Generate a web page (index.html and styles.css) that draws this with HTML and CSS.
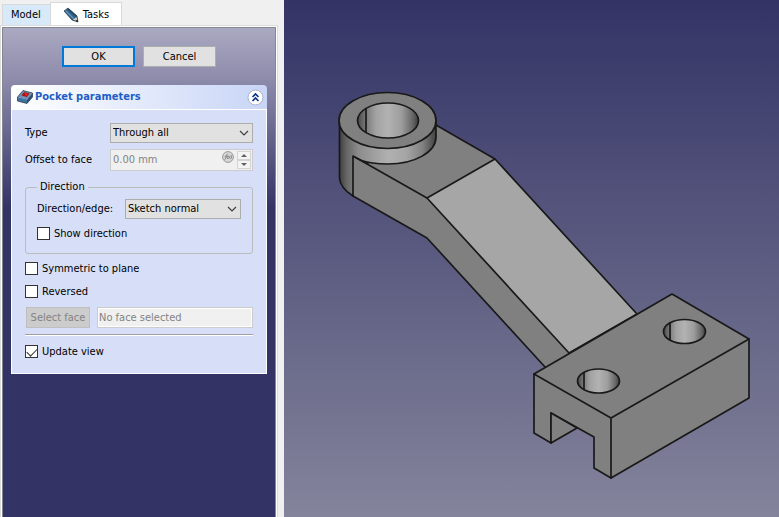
FILE: index.html
```html
<!DOCTYPE html>
<html lang="en">
<head>
<meta charset="utf-8">
<title>Pocket parameters</title>
<link rel="stylesheet" href="styles.css">
</head>
<body>
<div class="app">
  <aside class="combo">
    <nav class="tabs" role="tablist">
      <button class="tab" type="button" role="tab" aria-selected="false">Model</button>
      <button class="tab active" type="button" role="tab" aria-selected="true">
        <svg class="pencil" viewBox="0 0 16 16" aria-hidden="true">
          <path d="M1 4 5 1 14 9 15 15 9 13Z" fill="#32608a"/>
          <path d="M2.500 3.500 10.500 11.500" stroke="#5f9ac4" stroke-width="1.2"/>
          <path d="M5 2 13.500 9.500" stroke="#24486a" stroke-width="1.2"/>
          <path d="M10 12.500 13.500 10 15 15Z" fill="#d8cdb4"/>
          <path d="M12.500 14 14.500 12.500 15 15Z" fill="#15191d"/>
          <path d="M1 4 5 1 14 9 15 15 9 13Z" fill="none" stroke="#243542" stroke-width=".7"/>
        </svg>
        Tasks
      </button>
    </nav>
    <div class="pane">
      <form class="tasks">
        <div class="actions">
          <button class="push default" type="button">OK</button>
          <button class="push" type="button">Cancel</button>
        </div>
        <section class="box">
          <header class="box-head">
            <svg class="pocket" viewBox="0 0 16 14" aria-hidden="true">
              <path d="M.5 7 6 .5 15.500 3 10 9.500Z" fill="#6d92b6"/>
              <path d="M.5 7 10 9.500V13.500L.5 11Z" fill="#41719f"/>
              <path d="M10 9.500 15.500 3V7L10 13.500Z" fill="#2b4d70"/>
              <path d="M4.500 5.500 7 2 12.500 3.500 10 7Z" fill="#a81218"/>
              <path d="M7 3 11 4 9.500 6.200Z" fill="#f32618"/>
              <path d="M.5 7 6 .5 15.500 3V7L10 13.500 .5 11Z" fill="none" stroke="#1d3045" stroke-width=".7"/>
            </svg>
            <h1>Pocket parameters</h1>
            <button class="fold" type="button" aria-label="Collapse">
              <svg viewBox="0 0 17 17" aria-hidden="true">
                <circle cx="8.5" cy="8.5" r="7.5" fill="#fff" stroke="#a9b3d4"/>
                <path d="M5.5 8 8.5 5 11.5 8M5.5 12 8.5 9 11.5 12" fill="none" stroke="#0b2f8c" stroke-width="1.6"/>
              </svg>
            </button>
          </header>
          <div class="box-body">
            <div class="fields">
              <label for="type">Type</label>
              <div class="drop">
                <select id="type"><option>Through all</option></select>
                <svg class="chevron" viewBox="0 0 10 6" aria-hidden="true"><path d="M1 1 5 5 9 1"/></svg>
              </div>
              <label for="offset">Offset to face</label>
              <div class="spin">
                <input id="offset" type="text" value="0.00 mm" disabled>
                <svg class="fx" viewBox="0 0 12 12" aria-hidden="true">
                  <circle cx="6" cy="6" r="5.4" fill="#d6d6d6" stroke="#999"/>
                  <path d="M2.4 8.8C4 9 3.8 3 5.6 3M2.8 5.5H5M5.6 8C4.8 6.8 5 5.2 6 4.2M6.4 5 8 7.6M8.2 5 6.2 7.8M8.8 4C9.8 5.3 9.6 7 8.8 8" fill="none" stroke="#858585" stroke-width=".9"/>
                </svg>
                <div class="steps">
                  <button type="button" aria-label="Increase" disabled><svg viewBox="0 0 6 3" aria-hidden="true"><path d="M0 3 3 0 6 3Z"/></svg></button>
                  <button type="button" aria-label="Decrease" disabled><svg viewBox="0 0 6 3" aria-hidden="true"><path d="M0 0 3 3 6 0Z"/></svg></button>
                </div>
              </div>
            </div>
            <fieldset>
              <legend>Direction</legend>
              <div class="edge">
                <label for="edge">Direction/edge:</label>
                <div class="drop">
                  <select id="edge"><option>Sketch normal</option></select>
                  <svg class="chevron" viewBox="0 0 10 6" aria-hidden="true"><path d="M1 1 5 5 9 1"/></svg>
                </div>
              </div>
              <label class="check"><input type="checkbox">Show direction</label>
            </fieldset>
            <div class="checks">
              <label class="check"><input type="checkbox">Symmetric to plane</label>
              <label class="check"><input type="checkbox">Reversed</label>
            </div>
            <div class="face">
              <button type="button" disabled>Select face</button>
              <input type="text" value="No face selected" aria-label="Face" disabled>
            </div>
            <hr>
            <label class="check"><input type="checkbox" checked>Update view</label>
          </div>
        </section>
      </form>
    </div>
  </aside>
  <main class="view">
    <svg class="model" viewBox="284 0 495 517" role="img" aria-label="Bracket model">
      <defs>
        <linearGradient id="wall" gradientUnits="userSpaceOnUse" x1="339" x2="437" y1="0" y2="0">
          <stop offset="0" stop-color="#3d3d3d"/>
          <stop offset=".08" stop-color="#666"/>
          <stop offset=".2" stop-color="#8c8c8c"/>
          <stop offset=".5" stop-color="#b0b0b0"/>
          <stop offset=".68" stop-color="#a6a6a6"/>
          <stop offset=".85" stop-color="#828282"/>
          <stop offset="1" stop-color="#3c3c3c"/>
        </linearGradient>
        <linearGradient id="bore">
          <stop offset="0" stop-color="#484848"/>
          <stop offset=".15" stop-color="#7d7d7d"/>
          <stop offset=".3" stop-color="#a2a2a2"/>
          <stop offset=".5" stop-color="#b2b2b2"/>
          <stop offset=".72" stop-color="#9d9d9d"/>
          <stop offset=".9" stop-color="#686868"/>
          <stop offset="1" stop-color="#3d3d3d"/>
        </linearGradient>
      </defs>
      <g stroke="#191919" stroke-width="1.7" stroke-linejoin="round" stroke-linecap="round">
        <path fill="#808080" d="M353 156 436 125 495 159 427 198 570 354 545 367 427 238 353 196Z" stroke="none"/>
        <path fill="#a6a6a6" d="M427 198 495 159 637 314 569 353Z"/>
        <path fill="none" d="M436 125 495 159M353 156 427 198M353 196 427 238 545 367"/>
        <path fill="url(#wall)" stroke="none" d="M339 120V178C340 185 345 191 353 196V156C363 161 375 164 388 164C415 164 436 152 436 137V120Z"/>
        <path fill="none" d="M339.500 120V178C340 185 345 191 353 196V156L368 164M360 160C368 163 378 164 388 164C415 164 436 152 436 137V120"/>
        <ellipse cx="387.500" cy="120.500" rx="48.500" ry="28" fill="#808080"/>
        <ellipse cx="388" cy="120.500" rx="30.500" ry="17.500" fill="url(#bore)"/>
        <path fill="none" d="M366 109V132"/>
        <path fill="#808080" d="M534 374 672 294 749 339V398L611 478 594 468V437L551 413V443L534 433Z"/>
        <path fill="#808080" d="M551 413 577 428 551 443Z"/>
        <path fill="none" d="M534 374 611 418 749 339M611 418V478"/>
        <ellipse cx="598.500" cy="381" rx="21" ry="12" fill="url(#bore)"/>
        <ellipse cx="684.500" cy="331.500" rx="21" ry="12" fill="url(#bore)"/>
        <path fill="none" d="M584 373V389M670 323V340"/>
      </g>
    </svg>
  </main>
</div>
</body>
</html>
```
FILE: styles.css
```css
* { box-sizing: border-box; }

body {
  margin: 0;
  background: #f0f0f0;
  color: #000;
}

body, button, input, select {
  font-family: "DejaVu Sans Condensed", "Noto Sans", sans-serif;
  font-size: 11px;
  line-height: 14px;
}

.app {
  display: grid;
  grid-template-columns: 284px 1fr;
  min-height: 100vh;
}

.combo {
  display: flex;
  flex-direction: column;
  padding: 2px 6px 0 0;
}

.tabs {
  display: flex;
  align-items: flex-end;
  height: 23px;
  padding-left: 2px;
}

.tab {
  height: 21px;
  padding: 0 9px 0 8px;
  border: 1px solid #d9d9d9;
  border-width: 1px 0 0 1px;
  background: #d8eaf9;
}

.tab.active {
  display: flex;
  align-items: center;
  gap: 4px;
  height: 24px;
  margin-bottom: -1px;
  padding: 0 12px;
  border-width: 1px 1px 0;
  background: #fff;
}

.pencil { width: 16px; height: 16px; }

.pane {
  flex: 1;
  padding: 1px 1px 0;
  border: 1px solid #dcdcdc;
  border-width: 1px 1px 0;
  background: #fff;
}

.tasks {
  height: 100%;
  padding: 18px 8px 0;
  border: 1px solid #828790;
  border-bottom: 0;
  background: linear-gradient(#aaa9c1, #8e8cab 50px, #333366 180px);
}

.actions {
  display: flex;
  justify-content: center;
  gap: 8px;
  margin-bottom: 18px;
}

.push {
  width: 73px;
  height: 21px;
  padding: 0;
  border: 1px solid #adadad;
  background: #e1e1e1;
}

.push.default { border: 2px solid #0078d7; }

.box-head {
  display: flex;
  align-items: center;
  gap: 2px;
  height: 25px;
  padding: 0 3px 0 6px;
  border: 1px solid #fff;
  border-width: 0 0 1px;
  border-radius: 4px 4px 0 0;
  background: linear-gradient(90deg, #fff, #c8d5f7);
}

.pocket { width: 16px; height: 14px; }

h1 {
  flex: 1;
  margin: 0;
  color: #215dc6;
  font-size: 11px;
  line-height: 16px;
}

.fold {
  width: 17px;
  height: 17px;
  padding: 0;
  border: 0;
  background: none;
}

.fold svg { display: block; }

.box-body {
  padding: 13px 13px 15px;
  border: 1px solid #fff;
  border-top: 0;
  background: #d6dff7;
}

.fields {
  display: grid;
  grid-template-columns: 85px minmax(0, 1fr);
  row-gap: 6px;
  align-items: center;
}

.drop { position: relative; }

select {
  display: block;
  width: 100%;
  height: 20px;
  padding: 0 16px 0 2px;
  border: 1px solid #adadad;
  border-radius: 0;
  appearance: none;
  background: #e1e1e1;
  color: #000;
}

.chevron {
  position: absolute;
  top: 7px;
  right: 4px;
  width: 10px;
  height: 6px;
  fill: none;
  stroke: #404040;
  stroke-width: 1.2;
  pointer-events: none;
}

.spin {
  display: flex;
  height: 22px;
  padding: 1px;
  border: 1px solid #ccc;
  background: #f0f0f0;
}

.spin input {
  flex: 1;
  min-width: 0;
  padding: 0 1px;
  border: 0;
  background: none;
  color: #838383;
}

.fx { width: 12px; height: 12px; margin-right: 3px; }

.steps {
  display: grid;
  grid-template-rows: 1fr 1fr;
  width: 14px;
}

.steps button {
  display: grid;
  place-items: center;
  padding: 0;
  border: 1px solid #d4d4d4;
  background: #f4f4f4;
}

.steps svg { width: 6px; height: 3px; fill: #606060; }

fieldset {
  min-width: 0;
  margin: 9px 0 8px;
  padding: 5px 11px 13px;
  border: 1px solid #bcbcbc;
  border-radius: 3px;
}

legend { margin-left: 0; padding: 0 3px; }

.edge {
  display: grid;
  grid-template-columns: 88px minmax(0, 1fr);
  align-items: center;
  margin-bottom: 8px;
}

.check {
  display: flex;
  align-items: center;
  gap: 4px;
  height: 13px;
}

.check input {
  display: grid;
  place-items: center;
  width: 13px;
  height: 13px;
  margin: 0;
  border: 1px solid #333;
  appearance: none;
  background: #fff;
}

.check input:checked::before {
  content: "";
  width: 9px;
  height: 5px;
  border: solid #333;
  border-width: 0 0 1px 1px;
  transform: translateY(-1px) rotate(-45deg);
}

.checks { display: grid; gap: 10px; }

.face {
  display: grid;
  grid-template-columns: 64px minmax(0, 1fr);
  gap: 7px;
  margin: 9px 0 6px;
  padding-left: 1px;
}

.face button,
.face input {
  min-width: 0;
  height: 21px;
  padding: 0;
  border: 1px solid #bfbfbf;
  background: #ccc;
  color: #838383;
}

.face input {
  padding: 0 1px;
  border-color: #ccc;
  background: #f0f0f0;
  box-shadow: inset 0 0 0 1px #fff;
}

hr {
  height: 2px;
  margin: 0 0 9px;
  border: 0;
  border-top: 1px solid #a0a0a0;
  background: #fff;
}

.view {
  min-width: 0;
  background: linear-gradient(#333366, #84849c);
}

.model {
  display: block;
  width: 100%;
  height: 100vh;
}
```
